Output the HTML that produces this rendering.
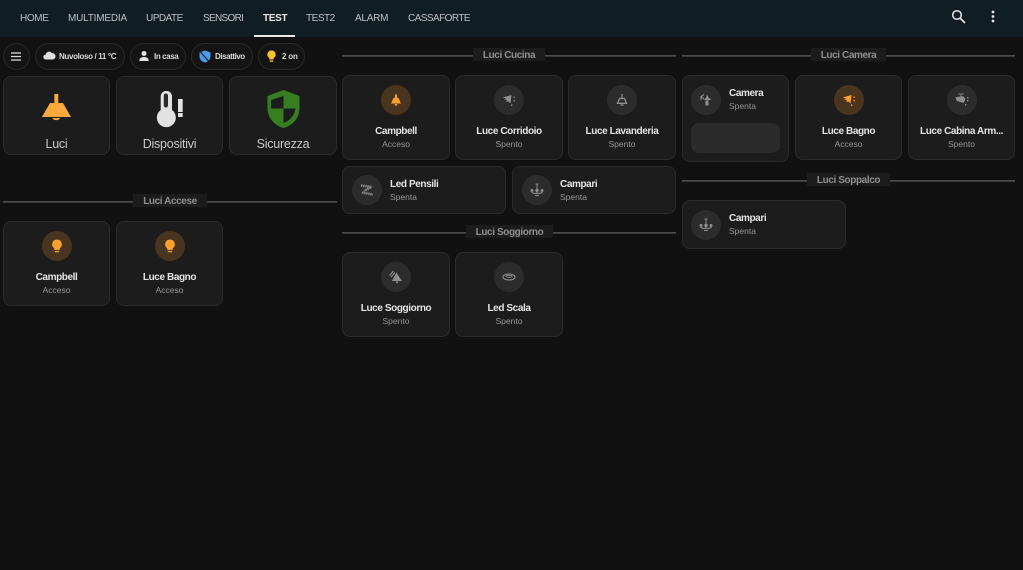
<!DOCTYPE html>
<html><head><meta charset="utf-8">
<style>
html,body{margin:0;padding:0;width:1023px;height:570px;overflow:hidden;background:#111;font-family:"Liberation Sans",sans-serif;color:#e1e1e1}
.a{position:absolute}
#hd{left:0;top:0;width:1023px;height:37px;background:#101e24}
.t{position:absolute;top:12px;font-size:10px;line-height:13px;color:#bcc0c2;white-space:nowrap}
.chip{position:absolute;top:43px;height:25px;border:1px solid #2a2a2a;border-radius:14px;background:#141414}
.chip span{position:absolute;top:7px;font-size:8px;line-height:11px;font-weight:bold;color:#d8d8d8;white-space:nowrap;letter-spacing:-.35px}
.c{position:absolute;box-sizing:border-box;background:#1c1c1c;border:1px solid #2b2b2b;border-radius:8px}
.ci{position:absolute;width:30px;height:30px;border-radius:50%;background:#2c2c2c}
.ci.on{background:#48341f}
.ci svg{position:absolute;left:7px;top:7px;width:16px;height:16px}
.n{position:absolute;font-size:10px;line-height:13px;font-weight:bold;color:#e4e4e4;white-space:nowrap;letter-spacing:-.4px;margin-top:1px}
.s{position:absolute;font-size:8.5px;line-height:11px;color:#969696;white-space:nowrap}
.cen{left:0;right:0;text-align:center}
.big{position:absolute;left:0;right:0;top:60px;text-align:center;font-size:12.5px;line-height:15px;color:#c8c8c8;letter-spacing:-.25px}
.dv{position:absolute;height:1px;background:#4c4c4c;border-bottom:1px solid #3a3a3a}
.lb{position:absolute;height:13px;background:#1c1c1c;font-size:10px;line-height:15px;font-weight:bold;color:#8f8f8f;text-align:center;white-space:nowrap;letter-spacing:-.4px}
</style></head><body>

<div class="a" id="hd"></div>
<div class="t" style="left:20px;letter-spacing:-.37px">HOME</div>
<div class="t" style="left:68px;letter-spacing:-.2px">MULTIMEDIA</div>
<div class="t" style="left:146px;letter-spacing:-.5px">UPDATE</div>
<div class="t" style="left:203px;letter-spacing:-.68px">SENSORI</div>
<div class="t" style="left:263px;color:#e8e8e8;font-weight:bold;letter-spacing:-.3px">TEST</div>
<div class="t" style="left:306px;letter-spacing:-.48px">TEST2</div>
<div class="t" style="left:355px;letter-spacing:-.26px">ALARM</div>
<div class="t" style="left:408px;letter-spacing:-.56px">CASSAFORTE</div>
<div class="a" style="left:254px;top:35px;width:41px;height:2px;background:#e8e8e8"></div>
<svg class="a" style="left:950px;top:8px" width="17" height="17" viewBox="0 0 17 17"><circle cx="7" cy="7" r="4.300" fill="none" stroke="#e6e6e6" stroke-width="1.500"/><path d="M10.200 10.200L15 15" stroke="#e6e6e6" stroke-width="1.700"/></svg>
<svg class="a" style="left:990px;top:10px" width="6" height="13" viewBox="0 0 6 13"><circle cx="3" cy="2" r="1.400" fill="#e6e6e6"/><circle cx="3" cy="6.500" r="1.400" fill="#e6e6e6"/><circle cx="3" cy="11" r="1.400" fill="#e6e6e6"/></svg>

<div class="chip" style="left:3px;width:25px"><svg class="a" style="left:7px;top:8px" width="11" height="9" viewBox="0 0 11 9"><path d="M0 1h10M0 4.500h10M0 8h10" stroke="#ddd" stroke-width="1.200"/></svg></div>
<div class="chip" style="left:35px;width:88px"><svg class="a" style="left:7px;top:6px" width="13" height="11" viewBox="0 0 13 11"><path d="M3 9.500a2.500 2.500 0 0 1-.3-5A3.500 3.500 0 0 1 9 3.200a2.800 2.800 0 0 1 .8 6.300z" fill="#e0e0e0"/></svg><span style="left:23px">Nuvoloso / 11 °C</span></div>
<div class="chip" style="left:130px;width:54px"><svg class="a" style="left:7px;top:6px" width="12" height="12" viewBox="0 0 12 12"><circle cx="6" cy="3.500" r="2.500" fill="#e0e0e0"/><path d="M1.500 11V9.500C1.500 8 4 7 6 7s4.500 1 4.500 2.500V11z" fill="#e0e0e0"/></svg><span style="left:23px;letter-spacing:-.4px">In casa</span></div>
<div class="chip" style="left:191px;width:60px"><svg class="a" style="left:7px;top:6px" width="12" height="13" viewBox="0 0 12 13"><path d="M6 .5L11.500 2.500V6.500C11.500 9.500 9 11.800 6 12.500 3 11.800.5 9.500.5 6.500V2.500z" fill="#4a9bea"/><path d="M1.500 2L10 11.500" stroke="#141414" stroke-width="1"/></svg><span style="left:23px;letter-spacing:-.45px">Disattivo</span></div>
<div class="chip" style="left:258px;width:45px"><svg class="a" style="left:7px;top:6px" width="11" height="13" viewBox="0 0 11 13"><path d="M5.500.5a4 4 0 0 1 2.200 7.400V9.500H3.300V7.900A4 4 0 0 1 5.500.5z" fill="#fbc02d"/><path d="M3.800 10.500h3.400v1.300H3.800z" fill="#fbc02d"/></svg><span style="left:23px;letter-spacing:-.2px">2 on</span></div>

<!-- top big cards -->
<div class="c" style="left:3px;top:76px;width:107px;height:79px">
<svg class="a" style="left:38px;top:17px" width="30" height="30" viewBox="0 0 30 30"><rect x="12.300" y="0" width="4" height="10" fill="#f9a93b"/><path d="M8 9H21L29 23H0z" fill="#f9a93b"/><path d="M10.500 24h7.500c-.5 2.800-7 2.800-7.500 0z" fill="#f9a93b"/></svg>
<div class="big">Luci</div></div>
<div class="c" style="left:116px;top:76px;width:107px;height:79px">
<svg class="a" style="left:38px;top:14px" width="30" height="38" viewBox="0 0 30 38"><path d="M5.700 5.500a5.650 5.650 0 0 1 11.300 0V19a9.500 9.500 0 1 1-11.300 0z" fill="#e2e2e2"/><rect x="8.800" y="2.500" width="4.200" height="14" rx="2.100" fill="#2a2a2a"/><rect x="23" y="8" width="4.700" height="13" fill="#e2e2e2"/><rect x="23" y="22" width="4.700" height="4" fill="#e2e2e2"/></svg>
<div class="big">Dispositivi</div></div>
<div class="c" style="left:229px;top:76px;width:108px;height:79px">
<svg class="a" style="left:37px;top:12px" width="33" height="40" viewBox="0 0 33 40"><path d="M16.500 1L32.500 7V19C32.500 29 25.500 36.500 16.500 39 7.500 36.500.5 29 .5 19V7z" fill="#377e22"/><path d="M16.500 7L4 11V19.500H16.500zM16.500 19.500V34C22.500 32 27.500 26.500 28.500 19.500z" fill="#1c1c1c"/></svg>
<div class="big">Sicurezza</div></div>

<!-- dividers -->
<div class="dv" style="left:3px;top:201px;width:334px"></div><div class="lb" style="left:133px;top:194px;width:74px">Luci Accese</div>
<div class="dv" style="left:342px;top:55px;width:334px"></div><div class="lb" style="left:473px;top:48px;width:72px">Luci Cucina</div>
<div class="dv" style="left:342px;top:232px;width:334px"></div><div class="lb" style="left:466px;top:225px;width:87px">Luci Soggiorno</div>
<div class="dv" style="left:682px;top:55px;width:333px"></div><div class="lb" style="left:811px;top:48px;width:75px">Luci Camera</div>
<div class="dv" style="left:682px;top:180px;width:333px"></div><div class="lb" style="left:807px;top:173px;width:83px">Luci Soppalco</div>

<!-- Luci Accese -->
<div class="c" style="left:3px;top:221px;width:107px;height:85px"><div class="ci on" style="left:38px;top:9px"><svg viewBox="0 0 16 16"><path d="M8 1.500a4.800 4.800 0 0 1 2.700 8.800V12H5.300v-1.700A4.800 4.800 0 0 1 8 1.500z" fill="#f9a02f"/><rect x="5.800" y="13" width="4.400" height="1.300" fill="#f9a02f"/></svg></div><div class="n cen" style="top:48px">Campbell</div><div class="s cen" style="top:63px;text-align:center">Acceso</div></div>
<div class="c" style="left:116px;top:221px;width:107px;height:85px"><div class="ci on" style="left:38px;top:9px"><svg viewBox="0 0 16 16"><path d="M8 1.500a4.800 4.800 0 0 1 2.700 8.800V12H5.300v-1.700A4.800 4.800 0 0 1 8 1.500z" fill="#f9a02f"/><rect x="5.800" y="13" width="4.400" height="1.300" fill="#f9a02f"/></svg></div><div class="n cen" style="top:48px">Luce Bagno</div><div class="s cen" style="top:63px;text-align:center">Acceso</div></div>

<!-- Cucina -->
<div class="c" style="left:342px;top:75px;width:108px;height:85px"><div class="ci on" style="left:38px;top:9px"><svg viewBox="0 0 16 16"><path d="M7 2.500h2V5.500L10.500 6 13 11.500H3L5.500 6 7 5.500z" fill="#f9a02f"/><path d="M6.800 12h2.400v1.500H6.800z" fill="#f9a02f"/></svg></div><div class="n cen" style="top:48px">Campbell</div><div class="s cen" style="top:63px;text-align:center">Acceso</div></div>
<div class="c" style="left:455px;top:75px;width:108px;height:85px"><div class="ci" style="left:38px;top:9px"><svg viewBox="0 0 16 16"><path d="M1.500 5.500L10.500 3 9.500 11.500 7.500 9.500 5 10 6 8 3 7.500 5 6.500z" fill="#8f8f8f"/><rect x="12.500" y="4.500" width="1.400" height="1.400" fill="#8f8f8f"/><rect x="12.500" y="8" width="1.400" height="1.400" fill="#8f8f8f"/><rect x="10" y="12.500" width="1.400" height="1.400" fill="#8f8f8f"/></svg></div><div class="n cen" style="top:48px">Luce Corridoio</div><div class="s cen" style="top:63px;text-align:center">Spento</div></div>
<div class="c" style="left:568px;top:75px;width:108px;height:85px"><div class="ci" style="left:38px;top:9px"><svg viewBox="0 0 16 16"><path d="M8 2v4M5.500 6.500h5L12.500 11.300H3.500z" fill="none" stroke="#8f8f8f" stroke-width="1.300"/><path d="M6.500 13h3" stroke="#8f8f8f" stroke-width="1.300"/></svg></div><div class="n cen" style="top:48px">Luce Lavanderia</div><div class="s cen" style="top:63px;text-align:center">Spento</div></div>
<div class="c" style="left:342px;top:166px;width:164px;height:48px"><div class="ci" style="left:9px;top:8px"><svg viewBox="0 0 16 16"><path d="M2 3.500L13 5M11.500 5.500L5 9M3 10.500L14 12.500" fill="none" stroke="#8a8a8a" stroke-width="2.400" stroke-dasharray="1.500 .6"/></svg></div><div class="n" style="left:47px;top:10px">Led Pensili</div><div class="s" style="left:47px;top:25px">Spenta</div></div>
<div class="c" style="left:512px;top:166px;width:164px;height:48px"><div class="ci" style="left:9px;top:8px"><svg viewBox="0 0 16 16"><path d="M6.500 2h3M8 2v10M2.500 10c1 2 10 2 11 0M6 13.500h4" fill="none" stroke="#8f8f8f" stroke-width="1"/><circle cx="3" cy="8.500" r="1.500" fill="#8f8f8f"/><circle cx="8" cy="8.500" r="1.700" fill="#8f8f8f"/><circle cx="13" cy="8.500" r="1.500" fill="#8f8f8f"/></svg></div><div class="n" style="left:47px;top:10px">Campari</div><div class="s" style="left:47px;top:25px">Spenta</div></div>

<!-- Soggiorno -->
<div class="c" style="left:342px;top:252px;width:108px;height:85px"><div class="ci" style="left:38px;top:9px"><svg viewBox="0 0 16 16"><path d="M1.500 6.500L5.500 2M3 8L7 3.500" stroke="#8f8f8f" stroke-width="1.100" fill="none"/><path d="M8.500 3.500L10.500 7 14 12H4L6.500 7z" fill="#8f8f8f"/><rect x="8" y="12.500" width="2" height="1.500" fill="#8f8f8f"/></svg></div><div class="n cen" style="top:48px">Luce Soggiorno</div><div class="s cen" style="top:63px;text-align:center">Spento</div></div>
<div class="c" style="left:455px;top:252px;width:108px;height:85px"><div class="ci" style="left:38px;top:9px"><svg viewBox="0 0 16 16"><ellipse cx="8" cy="8" rx="6" ry="3" fill="none" stroke="#8f8f8f" stroke-width="1.100"/><ellipse cx="8" cy="7.300" rx="3" ry="1" fill="none" stroke="#8f8f8f" stroke-width=".8"/></svg></div><div class="n cen" style="top:48px">Led Scala</div><div class="s cen" style="top:63px;text-align:center">Spento</div></div>

<!-- Camera -->
<div class="c" style="left:682px;top:75px;width:107px;height:87px"><div class="ci" style="left:8px;top:9px"><svg viewBox="0 0 16 16"><path d="M3 8V4.500L6 2.500M3 4.500L6 7" fill="none" stroke="#8f8f8f" stroke-width="1.100"/><path d="M9 2.500L11 6 13.500 8H5.500L8 6z" fill="#8f8f8f"/><rect x="7.500" y="8.500" width="3" height="5" fill="#8f8f8f"/></svg></div><div class="n" style="left:46px;top:10px">Camera</div><div class="s" style="left:46px;top:25px">Spenta</div><div class="a" style="left:8px;top:47px;width:89px;height:30px;border-radius:8px;background:#2b2b2b"></div></div>
<div class="c" style="left:795px;top:75px;width:107px;height:85px"><div class="ci on" style="left:38px;top:9px"><svg viewBox="0 0 16 16"><path d="M1.500 5.500L10.500 3 9.500 11.500 7.500 9.500 5 10 6 8 3 7.500 5 6.500z" fill="#f9a02f"/><rect x="12.500" y="4.500" width="1.400" height="1.400" fill="#f9a02f"/><rect x="12.500" y="8" width="1.400" height="1.400" fill="#f9a02f"/><rect x="10" y="12.500" width="1.400" height="1.400" fill="#f9a02f"/></svg></div><div class="n cen" style="top:48px">Luce Bagno</div><div class="s cen" style="top:63px;text-align:center">Acceso</div></div>
<div class="c" style="left:908px;top:75px;width:107px;height:85px"><div class="ci" style="left:38px;top:9px"><svg viewBox="0 0 16 16"><path d="M4 2h6M7 2v3M2 5.500L9 4.500 11 7 9.500 10.500 3 8.500z" fill="#8f8f8f" stroke="#8f8f8f" stroke-width=".8"/><rect x="13" y="5" width="1.400" height="1.400" fill="#8f8f8f"/><rect x="13" y="8" width="1.400" height="1.400" fill="#8f8f8f"/><rect x="11" y="12" width="1.400" height="1.400" fill="#8f8f8f"/></svg></div><div class="n cen" style="top:48px">Luce Cabina Arm...</div><div class="s cen" style="top:63px;text-align:center">Spento</div></div>

<!-- Soppalco -->
<div class="c" style="left:682px;top:200px;width:164px;height:49px"><div class="ci" style="left:8px;top:9px"><svg viewBox="0 0 16 16"><path d="M6.500 2h3M8 2v10M2.500 10c1 2 10 2 11 0M6 13.500h4" fill="none" stroke="#8f8f8f" stroke-width="1"/><circle cx="3" cy="8.500" r="1.500" fill="#8f8f8f"/><circle cx="8" cy="8.500" r="1.700" fill="#8f8f8f"/><circle cx="13" cy="8.500" r="1.500" fill="#8f8f8f"/></svg></div><div class="n" style="left:46px;top:10px">Campari</div><div class="s" style="left:46px;top:25px">Spenta</div></div>

</body></html>
